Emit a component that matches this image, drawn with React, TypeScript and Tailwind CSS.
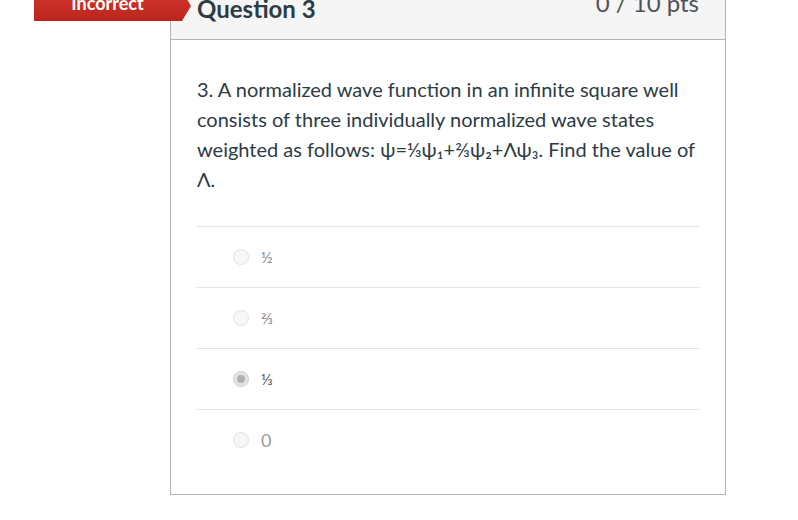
import React from "react";

const answers = [
  { label: "½", selected: false, cls: "text-[16px] text-[#8a8a8a]" },
  { label: "⅔", selected: false, cls: "text-[16px] text-[#8a8a8a]" },
  { label: "⅓", selected: true, cls: "text-[16px] text-[#555]" },
  { label: "0", selected: false, cls: "text-[18px] text-[#9a9a9a]" },
];

function Radio({ selected }: { selected: boolean }) {
  if (selected) {
    return (
      <span className="flex h-[16px] w-[16px] items-center justify-center rounded-full border border-[#cfcfcf] bg-[#e4e4e4]">
        <span className="h-[8px] w-[8px] rounded-full bg-[#b0b0b0]" />
      </span>
    );
  }
  return (
    <span className="h-[16px] w-[16px] rounded-full border border-[#e2e2e2] bg-[#f7f7f7]" />
  );
}

export default function App() {
  return (
    <div className="h-[520px] w-[798px] overflow-hidden bg-white font-['Lato','Liberation_Sans',sans-serif]">
      <div className="-mt-[20px] ml-[170px] w-[556px]">
        <div className="relative border border-[#b4b4b4] bg-white">

          {/* Incorrect banner */}

          <div className="absolute -left-[137px] top-[10px] h-[30px] w-[157px] bg-gradient-to-b from-[#d3362d] to-[#bb251d] shadow-[0_1px_1px_rgba(0,0,0,0.35)] [clip-path:polygon(0_0,calc(100%-9px)_0,100%_50%,calc(100%-9px)_100%,0_100%)]">
            <div className="flex h-full items-center justify-center pb-[7px] pr-[10px] text-[18px] font-bold leading-none text-white">
              Incorrect
            </div>
          </div>

          {/* Header */}

          <div className="flex h-[59px] items-start justify-between border-b border-[#b4b4b4] bg-[#f5f5f5] pl-[26px] pr-[26px]">
            <h3 className="mt-[15px] text-[24px] font-bold leading-[26px] text-[#2d3b45]">
              Question 3
            </h3>
            <span className="mt-[10px] text-[24px] leading-[24px] text-[#4d5358]">
              0 / 10 pts
            </span>
          </div>

          {/* Body */}

          <div className="px-[25px] pb-[24px] pt-[34px]">
            <p className="pl-[1px] text-[20px] leading-[30px] text-[#2d3b45]">
              3. A normalized wave function in an infinite square well consists of three individually normalized wave states weighted as follows: ψ=⅓ψ₁+⅔ψ₂+Λψ₃. Find the value of Λ.
            </p>

            <div className="mt-[32px]">
              {answers.map((a, i) => (
                <div
                  key={i}
                  className="flex h-[61px] items-center border-t border-[#e6e6e6] pl-[37px]"
                >
                  <Radio selected={a.selected} />
                  <span className={`ml-[12px] leading-none ${a.cls}`}>
                    {a.label}
                  </span>
                </div>
              ))}
            </div>
          </div>
        </div>
      </div>
    </div>
  );
}
